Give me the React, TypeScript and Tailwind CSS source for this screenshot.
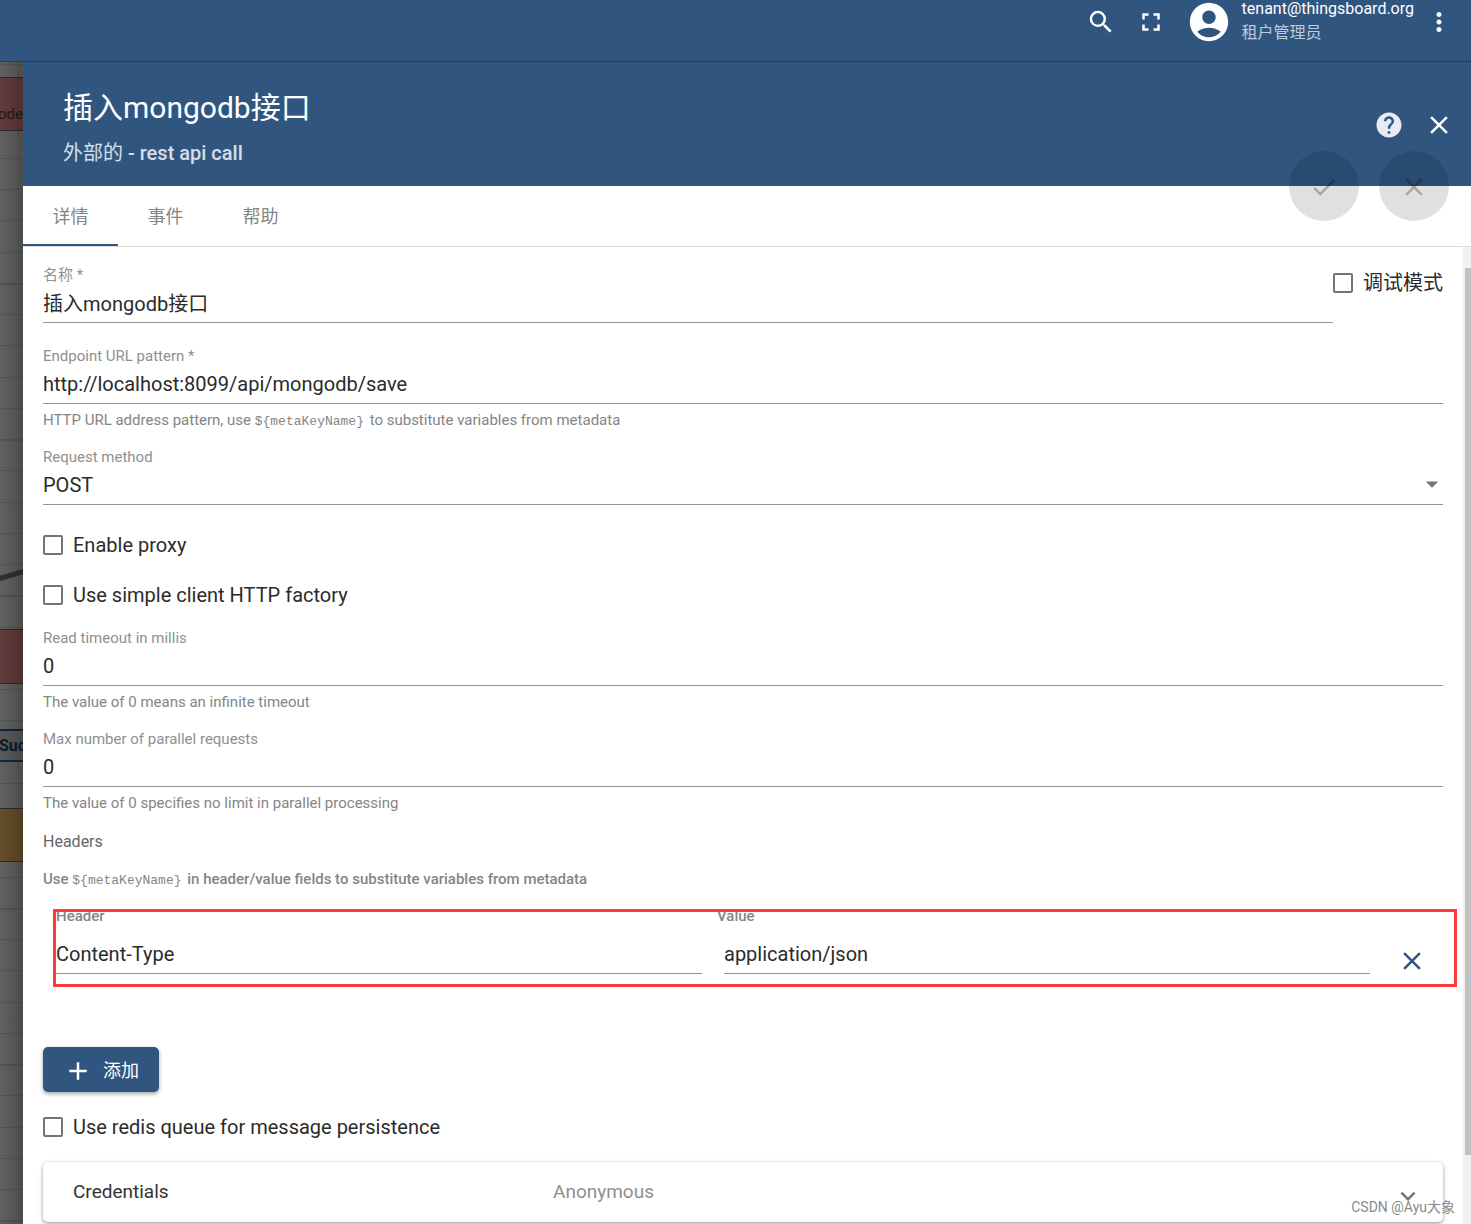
import React, { useState } from "react";
import {
  MdAccountCircle,
  MdAdd,
  MdArrowDropDown,
  MdCheck,
  MdClose,
  MdExpandMore,
  MdFullscreen,
  MdHelp,
  MdMoreVert,
  MdSearch,
} from "react-icons/md";

const GRID_STEP = 31.25;
const gridRows = Array.from({ length: 64 }, (_, i) => Math.round(2 + i * GRID_STEP));

function RuleCanvas() {
  return (
    <aside className="relative w-[23px] shrink-0 overflow-hidden bg-[#5f5f5f]">
      <svg className="absolute inset-0 h-full w-full" aria-hidden="true">
        {gridRows.map((y, i) => (
          <rect key={y} x="0" y={y} width="100%" height={i % 5 === 2 ? 2 : 1} fill="#545454" />
        ))}
        <rect x="18" y="0" width="1" height="100%" fill="#565656" />
        <path d="M-2 517 L25 509" stroke="#303030" strokeWidth="5" fill="none" />
      </svg>
      <div className="absolute top-[15px] right-0 left-0 flex h-[54px] items-center justify-end border-y border-[#2b2b2b] bg-[#613a3a] pt-5 text-[15px] text-[#1c1c1c]">
        <span>ode</span>
      </div>
      <div className="absolute top-[567px] right-0 left-0 h-[55px] border-y border-[#2b2b2b] bg-[#613a3a]" />
      <div className="absolute top-[667px] right-0 -left-1 flex h-[33px] items-center overflow-hidden rounded-l-md border-2 border-r-0 border-[#0f2745] bg-[#585858] pl-px text-base font-bold text-[#0b1a2e]">
        Suc
      </div>
      <div className="absolute top-[746px] right-0 left-0 h-[54px] border-y border-[#2b2b2b] bg-[#654d27]" />
      <div className="absolute inset-y-0 right-0 w-5 bg-linear-to-r from-transparent to-black/20" />
    </aside>
  );
}

const inputClass =
  "h-[38px] w-full rounded-none border-b border-[#949494] bg-transparent pb-0.5 text-xl text-[#2b2b2b] outline-none";

function Field(props: { id: string; label: string; value: string; hint?: React.ReactNode }) {
  return (
    <div className="min-w-0 flex-1">
      <label htmlFor={props.id} className="block text-[15px] leading-5 text-[#8f8f8f]">
        {props.label}
      </label>
      <input id={props.id} defaultValue={props.value} className={inputClass} />
      {props.hint && <p className="mt-1.5 h-5 text-[15px] leading-5 text-[#858585]">{props.hint}</p>}
    </div>
  );
}

function Check({ label }: { label: string }) {
  return (
    <label className="flex items-center gap-2.5 text-xl whitespace-nowrap text-[#2b2b2b]">
      <input
        type="checkbox"
        className="size-5 shrink-0 appearance-none rounded-xs border-2 border-[#757575] bg-white checked:bg-[#305680]"
      />
      {label}
    </label>
  );
}

function MetaKey() {
  return (
    <code className="mr-0.5 font-['Liberation_Mono',monospace] text-[13px]">{"${metaKeyName}"}</code>
  );
}

export default function App() {
  const [tab, setTab] = useState("详情");
  return (
    <div className="flex h-screen flex-col overflow-hidden bg-white font-[Roboto,'Noto_Sans_CJK_SC',sans-serif]">
      <header className="z-10 flex h-[62px] shrink-0 items-center justify-end border-b border-[#223f5e] bg-[#305680] pr-[17px] pb-[17px] text-white">
        <button aria-label="Search" className="mr-5">
          <MdSearch size={30} />
        </button>
        <button aria-label="Fullscreen" className="mr-5">
          <MdFullscreen size={30} />
        </button>
        <MdAccountCircle size={46} className="mr-2.5" />
        <div className="mr-2.5 pb-0.5 text-base leading-6">
          <div>tenant@thingsboard.org</div>
          <div className="text-white/70">租户管理员</div>
        </div>
        <button aria-label="Menu">
          <MdMoreVert size={30} />
        </button>
      </header>

      <div className="flex min-h-0 flex-1">
        <RuleCanvas />
        <main className="flex min-w-0 flex-1 flex-col bg-white">
          <div className="relative flex h-[124px] shrink-0 items-center justify-between bg-[#305680] pr-[17px] pl-10 text-white">
            <div className="pt-2">
              <h1 className="text-3xl leading-[50px]">插入mongodb接口</h1>
              <h2 className="text-xl leading-10 text-white/80">
                外部的 <span className="font-medium">- rest api call</span>
              </h2>
            </div>
            <div className="flex gap-5 pt-0.5">
              <button aria-label="Help" className="text-[#e8ebf1]">
                <MdHelp size={30} />
              </button>
              <button aria-label="Close">
                <MdClose size={30} />
              </button>
            </div>
            <div className="absolute right-[22px] -bottom-[35px] flex gap-5">
              <button disabled aria-label="Apply" className="flex size-[70px] items-center justify-center rounded-full bg-black/12 pt-0.5 text-black/26">
                <MdCheck size={30} />
              </button>
              <button disabled aria-label="Discard" className="flex size-[70px] items-center justify-center rounded-full bg-black/12 pt-0.5 text-black/26">
                <MdClose size={30} />
              </button>
            </div>
          </div>

          <nav role="tablist" className="flex h-[61px] shrink-0 border-b border-[#dedede]">
            {["详情", "事件", "帮助"].map((t) => (
              <button
                key={t}
                role="tab"
                aria-selected={tab === t}
                onClick={() => setTab(t)}
                className={
                  tab === t
                    ? "w-[95px] border-b-2 border-[#305680] pt-1 text-lg text-[#858585]"
                    : "w-[95px] border-b-2 border-transparent pt-1 text-lg text-[#858585]"
                }
              >
                {t}
              </button>
            ))}
          </nav>

          <div className="flex min-h-0 flex-1">
            <form className="min-w-0 flex-1 overflow-hidden px-5 pt-[18px]">
              <div className="flex items-start">
                <Field id="name" label="名称 *" value="插入mongodb接口" />
                <div className="pt-1">
                  <Check label="调试模式" />
                </div>
              </div>
              <div className="mt-[23px]">
                <Field
                  id="url"
                  label="Endpoint URL pattern *"
                  value="http://localhost:8099/api/mongodb/save"
                  hint={<>HTTP URL address pattern, use <MetaKey /> to substitute variables from metadata</>}
                />
              </div>
              <div className="mt-[17px]">
                <label htmlFor="method" className="block text-[15px] leading-5 text-[#8f8f8f]">
                  Request method
                </label>
                <div className="relative">
                  <select id="method" className={inputClass + " appearance-none"}>
                    <option>POST</option>
                    <option>GET</option>
                    <option>PUT</option>
                    <option>DELETE</option>
                  </select>
                  <MdArrowDropDown size={30} className="pointer-events-none absolute top-0.5 -right-1 text-[#757575]" />
                </div>
              </div>
              <div className="mt-[15px] flex flex-col">
                <div className="flex h-[50px] items-center"><Check label="Enable proxy" /></div>
                <div className="flex h-[50px] items-center"><Check label="Use simple client HTTP factory" /></div>
              </div>
              <div className="mt-2">
                <Field id="timeout" label="Read timeout in millis" value="0" hint="The value of 0 means an infinite timeout" />
              </div>
              <div className="mt-[17px]">
                <Field id="parallel" label="Max number of parallel requests" value="0" hint="The value of 0 specifies no limit in parallel processing" />
              </div>
              <h3 className="mt-[19px] text-base leading-5 text-[#666666]">Headers</h3>
              <p className="mt-[17px] h-5 text-[15px] leading-5 font-medium text-[#858585]">
                Use <MetaKey /> in header/value fields to substitute variables from metadata
              </p>

              <div className="mt-5 -mr-3.5 ml-2.5 h-[78px] overflow-hidden border-3 border-[#fd3a3a]">
                <table className="w-full table-fixed border-collapse">
                  <thead>
                    <tr className="h-2 text-left text-[15px] leading-2 text-[#858585]">
                      <th className="p-0 font-medium">Header</th>
                      <th className="p-0 pl-1 font-medium">Value</th>
                      <th className="w-[84px] p-0" />
                    </tr>
                  </thead>
                  <tbody>
                    <tr className="h-16">
                      <td className="p-0 pt-4 pr-[11px] align-top">
                        <input aria-label="Header" defaultValue="Content-Type" className={inputClass} />
                      </td>
                      <td className="p-0 pt-4 pl-[11px] align-top">
                        <input aria-label="Value" defaultValue="application/json" className={inputClass} />
                      </td>
                      <td className="p-0 pt-[18px]">
                        <button type="button" aria-label="Remove header" className="mx-auto block text-[#305680]">
                          <MdClose size={30} />
                        </button>
                      </td>
                    </tr>
                  </tbody>
                </table>
              </div>

              <button
                type="button"
                className="mt-[60px] flex h-[45px] items-center gap-2.5 rounded-[5px] bg-[#305680] px-5 pt-0.5 text-lg text-white shadow-[0_2px_4px_rgba(0,0,0,0.35)]"
              >
                <MdAdd size={30} />
                添加
              </button>
              <div className="mt-2.5 flex h-[50px] items-center">
                <Check label="Use redis queue for message persistence" />
              </div>
              <button
                type="button"
                className="mt-2.5 flex h-[60px] w-full items-center rounded-[5px] bg-white pr-5 pl-[30px] text-left text-[19px] text-[#333333] shadow-[0_2px_4px_rgba(0,0,0,0.32),0_0_3px_rgba(0,0,0,0.12)]"
              >
                <span className="w-[480px]">Credentials</span>
                <span className="flex-1 text-[#8f8f8f]">Anonymous</span>
                <MdExpandMore size={30} className="mt-2 text-[#757575]" />
              </button>
            </form>
            <div className="flex w-2 shrink-0 flex-col bg-[#f1f1f1] pt-[21px] pb-[69px] pl-0.5">
              <div className="flex-1 bg-[#c1c1c1]" />
            </div>
          </div>
        </main>
      </div>
      <div className="pointer-events-none absolute right-4 bottom-[7px] text-sm leading-5 text-[#8a8a8a]">
        CSDN @Ayu大象
      </div>
    </div>
  );
}
